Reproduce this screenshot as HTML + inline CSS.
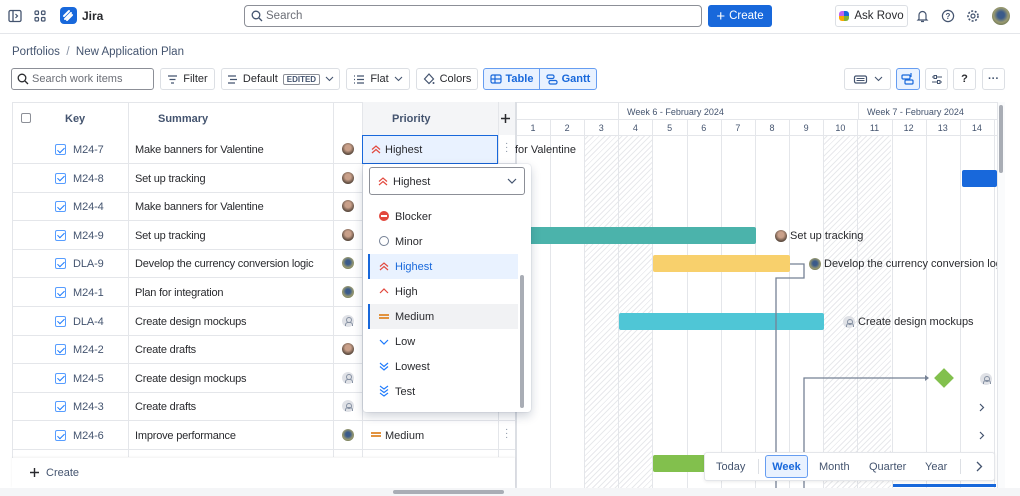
<!DOCTYPE html><html><head><meta charset="utf-8"><style>
*{box-sizing:border-box;margin:0;padding:0}
body{width:1020px;height:496px;overflow:hidden;background:#fff;font-family:"Liberation Sans",sans-serif;color:#292a2e;font-size:11px;position:relative}
.a{position:absolute}
.btn{position:absolute;border:1px solid #dcdfe4;border-radius:3px;background:#fff;display:flex;align-items:center;justify-content:center;gap:5px;font-size:11px;color:#44546f}
.hl{position:absolute;left:12px;width:503px;height:1px;background:#e4e6ea}
.vl{position:absolute;width:1px;background:#e4e6ea}
.row{position:absolute;left:12px;width:503px;height:28px;font-size:11px}
.cb{position:absolute;left:43px;top:9px;width:11px;height:11px;border:1.3px solid #579dff;border-radius:2px}
.cb:after{content:"";position:absolute;left:3px;top:0.5px;width:3px;height:6px;border:solid #1d7afc;border-width:0 1.3px 1.3px 0;transform:rotate(45deg)}
.key{position:absolute;left:61px;top:9px;color:#44546f;letter-spacing:-0.1px}
.sum{position:absolute;left:123px;top:9px;letter-spacing:-0.2px}
.av{position:absolute;left:330px;top:8px;width:12px;height:12px;border-radius:50%;background:radial-gradient(circle at 50% 40%,#c9a08a 30%,#5b4a3e 70%)}
.av.g{background:radial-gradient(circle at 50% 45%,#3b5b8a 25%,#9a9a70 60%,#5d6a4a 80%)}
.av.p{background:#dfe1e6}
.av.p:before{content:"";position:absolute;left:4px;top:2.5px;width:4px;height:4px;border-radius:50%;border:1px solid #8590a2}
.av.p:after{content:"";position:absolute;left:3px;top:7px;width:6px;height:3px;border-radius:3px 3px 0 0;border:1px solid #8590a2;border-bottom:none}
.hatch{position:absolute;top:135px;height:361px;background:repeating-linear-gradient(135deg,#fff 0 3px,#e8e9ec 3px 4px)}
.dd{position:absolute;left:395px;font-size:11px;color:#292a2e}
.ic{position:absolute}
</style></head><body>
<!-- top bar -->
<svg class="a" style="left:8px;top:9px" width="14" height="14" viewBox="0 0 14 14"><rect x="1" y="1.5" width="12" height="11" rx="1.5" fill="none" stroke="#44546f" stroke-width="1.3"/><line x1="5" y1="2" x2="5" y2="12" stroke="#44546f" stroke-width="1.3"/><path d="M7.5 5l2 2-2 2" fill="none" stroke="#44546f" stroke-width="1.2"/></svg>
<svg class="a" style="left:34px;top:10px" width="12" height="12" viewBox="0 0 12 12" fill="none" stroke="#44546f" stroke-width="1.2"><rect x="1" y="1" width="3.5" height="3.5" rx="1"/><rect x="7.5" y="1" width="3.5" height="3.5" rx="1"/><rect x="1" y="7.5" width="3.5" height="3.5" rx="1"/><rect x="7.5" y="7.5" width="3.5" height="3.5" rx="1"/></svg>
<div class="a" style="left:60px;top:7px;width:17px;height:17px;border-radius:4px;background:#1868db"><svg width="17" height="17" viewBox="0 0 17 17"><path d="M5 12l6-6M7 13l5-5M4 9l5-5" stroke="#fff" stroke-width="2" stroke-linecap="round"/></svg></div>
<div class="a" style="left:82px;top:9px;font-size:12px;font-weight:bold;color:#292a2e">Jira</div>
<div class="a" style="left:244px;top:5px;width:458px;height:22px;border:1px solid #8c8f97;border-radius:4px"></div>
<svg class="a" style="left:251px;top:10px" width="12" height="12" viewBox="0 0 12 12"><circle cx="5" cy="5" r="3.8" fill="none" stroke="#44546f" stroke-width="1.3"/><path d="M8 8l3 3" stroke="#44546f" stroke-width="1.3"/></svg>
<div class="a" style="left:266px;top:10px;font-size:11.5px;color:#6b6e76">Search</div>
<div class="a" style="left:708px;top:5px;width:64px;height:22px;background:#1868db;border-radius:3px;color:#fff;font-size:11.5px;display:flex;align-items:center;justify-content:center;gap:4px"><span style="font-size:15px;line-height:1">+</span>Create</div>
<div class="btn" style="left:835px;top:5px;width:73px;height:22px;color:#292a2e;font-size:11.5px"><span style="width:10px;height:10px;border-radius:3px;background:conic-gradient(#1868db 0 25%,#82b536 0 50%,#fca700 0 75%,#bf63f3 0)"></span>Ask Rovo</div>
<svg class="a" style="left:916px;top:9px" width="13" height="14" viewBox="0 0 13 14"><path d="M3 10V6a3.5 3.5 0 017 0v4l1 1H2z M5 12.5h3" fill="none" stroke="#44546f" stroke-width="1.2"/></svg>
<svg class="a" style="left:941px;top:9px" width="14" height="14" viewBox="0 0 14 14"><circle cx="7" cy="7" r="5.6" fill="none" stroke="#44546f" stroke-width="1.2"/><text x="7" y="10" font-size="8" text-anchor="middle" fill="#44546f" font-family="Liberation Sans" font-weight="bold">?</text></svg>
<svg class="a" style="left:966px;top:9px" width="14" height="14" viewBox="0 0 14 14"><circle cx="7" cy="7" r="2" fill="none" stroke="#44546f" stroke-width="1.2"/><circle cx="7" cy="7" r="5" fill="none" stroke="#44546f" stroke-width="1.6" stroke-dasharray="2 1.6"/></svg>
<div class="a" style="left:992px;top:7px;width:18px;height:18px;border-radius:50%;background:radial-gradient(circle at 50% 45%,#3b5b8a 25%,#9a9a70 55%,#5d6a4a 85%)"></div>
<div class="a" style="left:0;top:33px;width:1020px;height:1px;background:#e4e6ea"></div>
<!-- breadcrumbs -->
<div class="a" style="left:12px;top:46px;font-size:11.5px;color:#44546f">Portfolios &nbsp;<span style="color:#8590a2">/</span>&nbsp; New Application Plan</div>
<!-- toolbar -->
<div class="a" style="left:11px;top:68px;width:143px;height:22px;border:1px solid #8c8f97;border-radius:3px"></div>
<svg class="a" style="left:17px;top:73px" width="12" height="12" viewBox="0 0 12 12"><circle cx="5" cy="5" r="3.8" fill="none" stroke="#292a2e" stroke-width="1.3"/><path d="M8 8l3 3" stroke="#292a2e" stroke-width="1.3"/></svg>
<div class="a" style="left:32px;top:73px;color:#6b6e76">Search work items</div>
<div class="btn" style="left:160px;top:68px;width:55px;height:22px;color:#292a2e"><svg width="11" height="9" viewBox="0 0 11 9"><path d="M1 1h9M2.5 4.5h6M4 8h3" stroke="#44546f" stroke-width="1.2"/></svg>Filter</div>
<div class="btn" style="left:221px;top:68px;width:119px;height:22px;color:#292a2e"><svg width="11" height="9" viewBox="0 0 11 9"><path d="M1 1h8M3 4.5h7M1 8h7" stroke="#44546f" stroke-width="1.2"/></svg>Default<span style="border:1px solid #8c8f97;border-radius:2px;font-size:8px;font-weight:bold;padding:0 3px;color:#44546f">EDITED</span><svg width="9" height="6" viewBox="0 0 9 6"><path d="M1 1l3.5 3.5L8 1" fill="none" stroke="#44546f" stroke-width="1.1"/></svg></div>
<div class="btn" style="left:346px;top:68px;width:64px;height:22px;color:#292a2e"><svg width="12" height="9" viewBox="0 0 12 9"><path d="M1 1h1M4 1h7M1 4.5h1M4 4.5h7M1 8h1M4 8h7" stroke="#44546f" stroke-width="1.2"/></svg>Flat <svg width="9" height="6" viewBox="0 0 9 6"><path d="M1 1l3.5 3.5L8 1" fill="none" stroke="#44546f" stroke-width="1.1"/></svg></div>
<div class="btn" style="left:416px;top:68px;width:62px;height:22px;color:#292a2e"><svg width="12" height="12" viewBox="0 0 12 12"><path d="M6 1L1.5 6 6 10.5 10.5 6z" fill="none" stroke="#44546f" stroke-width="1.2"/><circle cx="10.5" cy="10" r="1" fill="#44546f"/></svg>Colors</div>
<div class="a" style="left:483px;top:68px;width:114px;height:22px;border:1px solid #669df1;border-radius:3px;background:#e9f2ff;display:flex;color:#1868db;font-size:11px;font-weight:bold"><div style="width:56px;display:flex;align-items:center;justify-content:center;gap:4px;border-right:1px solid #669df1"><svg width="12" height="10" viewBox="0 0 12 10"><rect x="1" y="1" width="10" height="8" rx="1.5" fill="none" stroke="#1868db" stroke-width="1.2"/><path d="M1 5h10M5 1v8" stroke="#1868db" stroke-width="1.2"/></svg>Table</div><div style="flex:1;display:flex;align-items:center;justify-content:center;gap:4px"><svg width="12" height="11" viewBox="0 0 12 11"><rect x="1" y="1" width="7" height="3.5" rx="1.5" fill="none" stroke="#1868db" stroke-width="1.2"/><rect x="3" y="6.5" width="8" height="3.5" rx="1.5" fill="none" stroke="#1868db" stroke-width="1.2"/></svg>Gantt</div></div>
<div class="btn" style="left:844px;top:68px;width:47px;height:22px;color:#44546f"><svg width="16" height="11" viewBox="0 0 16 11"><rect x="1.5" y="2" width="12" height="7" rx="1.5" fill="none" stroke="#44546f" stroke-width="1.2"/><path d="M3.5 4.5h8M3.5 6.5h8" stroke="#44546f"/></svg><svg width="9" height="6" viewBox="0 0 9 6"><path d="M1 1l3.5 3.5L8 1" fill="none" stroke="#44546f" stroke-width="1.1"/></svg></div>
<div class="a" style="left:896px;top:68px;width:24px;height:22px;border:1px solid #669df1;border-radius:3px;background:#e9f2ff"></div>
<svg class="a" style="left:901px;top:72px" width="14" height="14" viewBox="0 0 14 14" fill="none" stroke="#1868db" stroke-width="1.2"><rect x="1" y="3" width="8" height="4" rx="1"/><rect x="4" y="8" width="8" height="4" rx="1"/><path d="M10 1v4"/></svg>
<div class="btn" style="left:925px;top:68px;width:23px;height:22px;color:#44546f"><svg width="12" height="11" viewBox="0 0 12 11"><path d="M1 3h10M1 8h10" stroke="#44546f" stroke-width="1.1"/><rect x="3" y="1.5" width="2.5" height="3" fill="#fff" stroke="#44546f"/><rect x="6.5" y="6.5" width="2.5" height="3" fill="#fff" stroke="#44546f"/></svg></div>
<div class="btn" style="left:953px;top:68px;width:23px;height:22px;color:#292a2e;font-weight:bold">?</div>
<div class="btn" style="left:982px;top:68px;width:23px;height:22px;color:#44546f;font-weight:bold">&middot;&middot;&middot;</div>
<!-- table frame -->
<div class="a" style="left:12px;top:102px;width:993px;height:1px;background:#e4e6ea"></div>
<div class="a" style="left:362px;top:102px;width:153px;height:33px;background:#f4f5f7"></div>
<div class="vl" style="left:12px;top:102px;height:360px"></div>
<div class="vl" style="left:128px;top:102px;height:355px"></div>
<div class="vl" style="left:333px;top:102px;height:355px"></div>
<div class="vl" style="left:362px;top:102px;height:355px"></div>
<div class="vl" style="left:498px;top:102px;height:355px"></div>
<div class="a" style="left:515px;top:102px;width:2px;height:394px;background:#dcdfe4"></div>
<div class="a" style="left:21px;top:113px;width:10px;height:10px;border:1px solid #8c8f97;border-radius:2px"></div>
<div class="a" style="left:65px;top:113px;font-weight:bold;color:#44546f">Key</div>
<div class="a" style="left:158px;top:113px;font-weight:bold;color:#44546f">Summary</div>
<div class="a" style="left:392px;top:113px;font-weight:bold;color:#44546f">Priority</div>
<svg class="a" style="left:500px;top:113px" width="11" height="11" viewBox="0 0 11 11"><path d="M5.5 1v9M1 5.5h9" stroke="#292a2e" stroke-width="1.5"/></svg>
<!-- gantt grid -->
<div class="hatch" style="left:584px;width:68px"></div>
<div class="hatch" style="left:823px;width:68px"></div>
<div class="a" style="left:517px;top:119px;width:480px;height:1px;background:#e4e6ea"></div>
<div class="a" style="left:517px;top:135px;width:480px;height:1px;background:#e4e6ea"></div>
<div class="a" style="left:627px;top:107px;font-size:9px;color:#44546f">Week 6 - February 2024</div>
<div class="a" style="left:867px;top:107px;font-size:9px;color:#44546f">Week 7 - February 2024</div>
<div class="vl" style="left:618px;top:102px;height:17px"></div>
<div class="vl" style="left:858px;top:102px;height:17px"></div>
<div id="g"></div>
<div class="a" style="left:997px;top:102px;width:8px;height:394px;background:#fafbfc;border-left:1px solid #e4e6ea"></div>
<div class="a" style="left:999px;top:105px;width:4px;height:68px;border-radius:2px;background:#a9adb5"></div>
<script>
var h='';for(var i=0;i<14;i++){var x=516+i*34.15;h+='<div class="vl" style="left:'+(x+34)+'px;top:119px;height:377px"></div><div class="a" style="left:'+x+'px;top:123px;width:34px;text-align:center;font-size:9px;color:#44546f">'+(i+1)+'</div>';}
document.getElementById('g').outerHTML=h;
</script>
<!-- bars -->
<div class="a" style="left:528px;top:227px;width:228px;height:17px;background:#4bb3ab;border-radius:2px"></div>
<div class="a" style="left:653px;top:255px;width:137px;height:17px;background:#f8d06c;border-radius:2px"></div>
<div class="a" style="left:619px;top:313px;width:205px;height:17px;background:#4fc6d6;border-radius:2px"></div>
<div class="a" style="left:962px;top:170px;width:35px;height:17px;background:#1868db;border-radius:2px"></div>
<div class="a" style="left:653px;top:455px;width:60px;height:17px;background:#82c04d;border-radius:2px"></div>
<div class="a" style="left:937px;top:371px;width:14px;height:14px;background:#82c04d;transform:rotate(45deg)"></div>
<svg class="a" style="left:0;top:0" width="1020" height="496"><g fill="none" stroke="#758195" stroke-width="1.3"><path d="M790 264H804V278H776V496"/><path d="M804 496V378H925"/></g><path d="M925 375l4 3-4 3z" fill="#758195"/></svg>
<div class="av" style="left:775px;top:230px"></div><div class="a" style="left:790px;top:230px">Set up tracking</div>
<div class="av g" style="left:809px;top:258px"></div><div class="a" style="left:824px;top:258px;width:173px;overflow:hidden;white-space:nowrap">Develop the currency conversion logic</div>
<div class="av p" style="left:843px;top:316px"></div><div class="a" style="left:858px;top:316px">Create design mockups</div>
<div class="av p" style="left:980px;top:373px"></div>
<div class="a" style="left:515px;top:144px">for Valentine</div>
<svg class="a" style="left:979px;top:403px" width="6" height="9" viewBox="0 0 6 9"><path d="M1 1l3.5 3.5L1 8" fill="none" stroke="#44546f" stroke-width="1.2"/></svg>
<svg class="a" style="left:979px;top:431px" width="6" height="9" viewBox="0 0 6 9"><path d="M1 1l3.5 3.5L1 8" fill="none" stroke="#44546f" stroke-width="1.2"/></svg>
<!-- rows -->
<div id="rows"></div>
<script>
var R=[["M24-7","Make banners for Valentine",""],["M24-8","Set up tracking",""],["M24-4","Make banners for Valentine",""],["M24-9","Set up tracking",""],["DLA-9","Develop the currency conversion logic","g"],["M24-1","Plan for integration","g"],["DLA-4","Create design mockups","p"],["M24-2","Create drafts",""],["M24-5","Create design mockups","p"],["M24-3","Create drafts","p"],["M24-6","Improve performance","g"]];
var s='';for(var i=0;i<R.length;i++){var t=135+i*28.6;s+='<div class="hl" style="top:'+(t+28)+'px"></div><div class="row" style="top:'+t+'px"><div class="cb"></div><div class="key">'+R[i][0]+'</div><div class="sum">'+R[i][1]+'</div><div class="av '+R[i][2]+'"></div><div class="a" style="left:493px;top:7px;color:#8590a2;font-size:10px;line-height:4px">&middot;<br>&middot;<br>&middot;</div></div>';}
document.getElementById('rows').outerHTML=s;
</script>
<!-- medium priority on last row -->
<div class="a" style="left:371px;top:432px;width:10px;height:2px;background:#e2933f;box-shadow:0 3px 0 #e2933f"></div>
<div class="a" style="left:385px;top:430px">Medium</div>
<!-- selected priority cell -->
<div class="a" style="left:362px;top:135px;width:136px;height:29px;background:#e9f2ff;border:1.5px solid #1868db"></div>
<svg class="ic" style="left:371px;top:145px" width="10" height="9" viewBox="0 0 10 9"><path d="M1 4.5l4-3.5 4 3.5M1 8l4-3.5 4 3.5" fill="none" stroke="#e2483d" stroke-width="1.2"/></svg>
<div class="a" style="left:385px;top:144px">Highest</div>
<!-- create footer -->
<div class="a" style="left:12px;top:458px;width:503px;height:30px;background:#fff;box-shadow:0 -1px 2px rgba(0,0,0,.06)"></div>
<svg class="a" style="left:29px;top:467px" width="11" height="11" viewBox="0 0 11 11"><path d="M5.5 1v9M1 5.5h9" stroke="#292a2e" stroke-width="1.4"/></svg>
<div class="a" style="left:46px;top:467px;color:#44546f">Create</div>
<div class="a" style="left:0;top:488px;width:1020px;height:8px;background:#f4f5f7"></div>
<div class="a" style="left:393px;top:490px;width:111px;height:4px;border-radius:2px;background:#a9adb5"></div>
<!-- dropdown -->
<div class="a" style="left:363px;top:164px;width:168px;height:248px;background:#fff;border-radius:3px;box-shadow:0 4px 10px rgba(9,30,66,.2),0 0 1px rgba(9,30,66,.3)"></div>
<div class="a" style="left:369px;top:167px;width:156px;height:28px;border:1px solid #8c8f97;border-radius:3px;background:#fff"></div>
<svg class="ic" style="left:378px;top:177px" width="10" height="9" viewBox="0 0 10 9"><path d="M1 4.5l4-3.5 4 3.5M1 8l4-3.5 4 3.5" fill="none" stroke="#e2483d" stroke-width="1.2"/></svg>
<div class="a" style="left:393px;top:176px">Highest</div>
<svg class="ic" style="left:507px;top:178px" width="10" height="6" viewBox="0 0 10 6"><path d="M1 1l4 4 4-4" fill="none" stroke="#44546f" stroke-width="1.2"/></svg>
<div class="a" style="left:368px;top:254px;width:150px;height:25px;background:#e9f2ff;border-left:2px solid #1868db"></div>
<div class="a" style="left:368px;top:304px;width:150px;height:25px;background:#f1f2f4;border-left:2px solid #1868db"></div>
<div class="a" style="left:520px;top:275px;width:4px;height:133px;border-radius:2px;background:#a9adb5"></div>
<div class="a" style="left:379px;top:211px;width:10px;height:10px;border-radius:50%;background:#e2483d"><div style="margin:4px 2px;height:2px;background:#fff"></div></div><div class="dd" style="top:211px">Blocker</div>
<div class="a" style="left:379px;top:236px;width:10px;height:10px;border-radius:50%;border:1.5px solid #758195"></div><div class="dd" style="top:236px">Minor</div>
<svg class="ic" style="left:379px;top:262px" width="10" height="9" viewBox="0 0 10 9"><path d="M1 4.5l4-3.5 4 3.5M1 8l4-3.5 4 3.5" fill="none" stroke="#e2483d" stroke-width="1.2"/></svg><div class="dd" style="top:261px;color:#1868db">Highest</div>
<svg class="ic" style="left:379px;top:288px" width="10" height="6" viewBox="0 0 10 6"><path d="M1 5l4-4 4 4" fill="none" stroke="#e2483d" stroke-width="1.2"/></svg><div class="dd" style="top:286px">High</div>
<div class="a" style="left:379px;top:314px;width:10px;height:2px;background:#e2933f;box-shadow:0 3px 0 #e2933f"></div><div class="dd" style="top:311px">Medium</div>
<svg class="ic" style="left:379px;top:339px" width="10" height="6" viewBox="0 0 10 6"><path d="M1 1l4 4 4-4" fill="none" stroke="#1d7afc" stroke-width="1.2"/></svg><div class="dd" style="top:336px">Low</div>
<svg class="ic" style="left:379px;top:362px" width="10" height="9" viewBox="0 0 10 9"><path d="M1 1l4 3.5 4-3.5M1 4.5l4 3.5 4-3.5" fill="none" stroke="#1d7afc" stroke-width="1.2"/></svg><div class="dd" style="top:361px">Lowest</div>
<svg class="ic" style="left:379px;top:385px" width="10" height="12" viewBox="0 0 10 12"><path d="M1 1l4 3 4-3M1 4.5l4 3 4-3M1 8l4 3 4-3" fill="none" stroke="#1d7afc" stroke-width="1.1"/></svg><div class="dd" style="top:386px">Test</div>
<!-- bottom timeline toolbar -->
<div class="a" style="left:704px;top:452px;width:291px;height:29px;background:#fff;border:1px solid #e4e6ea;border-radius:3px;box-shadow:0 1px 3px rgba(0,0,0,.08)"></div>
<div class="a" style="left:716px;top:461px;color:#44546f">Today</div>
<div class="a" style="left:758px;top:459px;width:1px;height:15px;background:#dcdfe4"></div>
<div class="a" style="left:765px;top:455px;width:43px;height:23px;border:1px solid #669df1;border-radius:3px;background:#e9f2ff;color:#1868db;font-weight:bold;display:flex;align-items:center;justify-content:center">Week</div>
<div class="a" style="left:819px;top:461px;color:#44546f">Month</div>
<div class="a" style="left:869px;top:461px;color:#44546f">Quarter</div>
<div class="a" style="left:925px;top:461px;color:#44546f">Year</div>
<div class="a" style="left:960px;top:459px;width:1px;height:15px;background:#dcdfe4"></div>
<svg class="a" style="left:976px;top:461px" width="7" height="11" viewBox="0 0 7 11"><path d="M1 1l4.5 4.5L1 10" fill="none" stroke="#44546f" stroke-width="1.3"/></svg>
<div class="a" style="left:893px;top:484px;width:103px;height:3px;background:#1868db"></div>
</body></html>
